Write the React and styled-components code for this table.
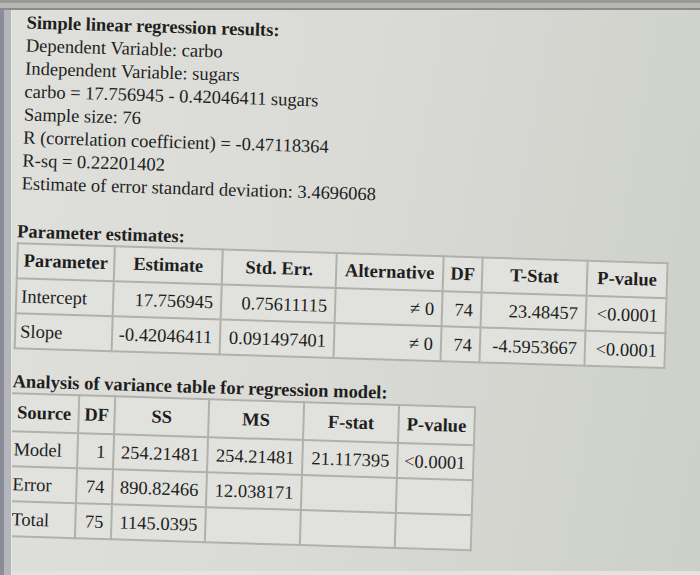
import React from "react";
import styled, { createGlobalStyle } from "styled-components";

const GlobalStyle = createGlobalStyle`
  html, body {
    margin: 0;
    padding: 0;
    background: #d6d7d2;
  }
  body {
    font-family: "Liberation Serif", "Times New Roman", serif;
    color: #1e1e1e;
  }
`;

const Screen = styled.div`
  width: 700px;
  height: 575px;
  overflow: hidden;
  display: flex;
  flex-direction: column;
`;

const TopBar = styled.div`
  height: 8px;
  flex: none;
  background: linear-gradient(#999a96 0 3px, #b7b8b4 3px 100%);
  border-bottom: 2px solid #8c8d89;
`;

const Body = styled.div`
  flex: 1;
  display: flex;
  min-height: 0;
`;

const SideBar = styled.div`
  width: 11px;
  flex: none;
  background: linear-gradient(90deg, #8a8d97 0 4px, #b4b6bc 4px 100%);
  border-right: 1px solid #e6e7e4;
`;

const Panel = styled.div`
  flex: 1;
  overflow: hidden;
  background: linear-gradient(100deg, #dfe0db 0%, #dadbd6 45%, #cdcfc9 100%);
  border-bottom: 4px solid #e3e4e0;
`;

const Content = styled.div`
  padding: 1px 0 0 12px;
  transform: rotate(1.75deg);
  transform-origin: 0 0;
`;

const Summary = styled.div`
  padding-left: 3px;
  font-size: 18.5px;
  line-height: 23px;
`;

const Line = styled.div`
  white-space: nowrap;
  font-weight: ${(p) => (p.$bold ? "bold" : "normal")};
`;

const Heading = styled.div`
  font-size: 18.5px;
  font-weight: bold;
  line-height: 22px;
  margin-top: ${(p) => p.$top}px;
  white-space: nowrap;
`;

const Table = styled.table`
  border-collapse: collapse;
  table-layout: fixed;
  font-size: 18.5px;
  margin-left: ${(p) => p.$shift || 0}px;
  background: #e1e2dd;
  border: 2px solid #b0b1ab;
`;

const Col = styled.col`
  width: ${(p) => p.$w}px;
`;

const Th = styled.th`
  height: ${(p) => p.$h}px;
  padding: 0 4px;
  border: 2px solid #b0b1ab;
  font-weight: bold;
  text-align: center;
  white-space: nowrap;
`;

const Td = styled.td`
  height: 31px;
  padding: 2px 7px 0 4px;
  border: 2px solid #b0b1ab;
  text-align: ${(p) => (p.$left ? "left" : "right")};
  white-space: nowrap;
`;

const summary = [
  "Dependent Variable: carbo",
  "Independent Variable: sugars",
  "carbo = 17.756945 - 0.42046411 sugars",
  "Sample size: 76",
  "R (correlation coefficient) = -0.47118364",
  "R-sq = 0.22201402",
  "Estimate of error standard deviation: 3.4696068",
];

const paramCols = [97, 108, 114, 107, 39, 105, 80];
const paramHead = ["Parameter", "Estimate", "Std. Err.", "Alternative", "DF", "T-Stat", "P-value"];
const paramRows = [
  ["Intercept", "17.756945", "0.75611115", "\u2260 0", "74", "23.48457", "<0.0001"],
  ["Slope", "-0.42046411", "0.091497401", "\u2260 0", "74", "-4.5953667", "<0.0001"],
];

const anovaCols = [69, 36, 94, 95, 95, 76];
const anovaHead = ["Source", "DF", "SS", "MS", "F-stat", "P-value"];
const anovaRows = [
  ["Model", "1", "254.21481", "254.21481", "21.117395", "<0.0001"],
  ["Error", "74", "890.82466", "12.038171", "", ""],
  ["Total", "75", "1145.0395", "", "", ""],
];

const Grid = ({ cols, head, rows, shift, headH = 33 }) => (
  <Table $shift={shift}>
    <colgroup>
      {cols.map((w, i) => (
        <Col key={i} $w={w} />
      ))}
    </colgroup>
    <thead>
      <tr>
        {head.map((h) => (
          <Th key={h} $h={headH}>{h}</Th>
        ))}
      </tr>
    </thead>
    <tbody>
      {rows.map((r) => (
        <tr key={r[0]}>
          {r.map((c, i) => (
            <Td key={i} $left={i === 0}>
              {c}
            </Td>
          ))}
        </tr>
      ))}
    </tbody>
  </Table>
);

export default function App() {
  return (
    <>
      <GlobalStyle />
      <Screen>
        <TopBar />
        <Body>
          <SideBar />
          <Panel>
            <Content>
              <Summary>
                <Line $bold>Simple linear regression results:</Line>
                {summary.map((s) => (
                  <Line key={s}>{s}</Line>
                ))}
              </Summary>

              <Heading $top={25}>Parameter estimates:</Heading>
              <Grid cols={paramCols} head={paramHead} rows={paramRows} />

              <Heading $top={21}>Analysis of variance table for regression model:</Heading>
              <Grid cols={anovaCols} head={anovaHead} rows={anovaRows} shift={-3} headH={36} />
            </Content>
          </Panel>
        </Body>
      </Screen>
    </>
  );
}
